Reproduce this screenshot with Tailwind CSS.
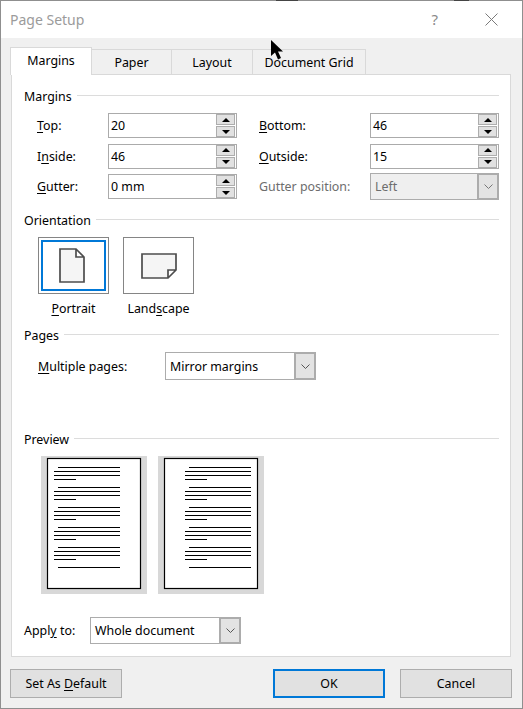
<!DOCTYPE html>
<html lang="en">
<head>
  <meta charset="UTF-8" />
  <title>Page Setup</title>
  <script src="https://cdn.jsdelivr.net/npm/@tailwindcss/browser@4"></script>
</head>
<body class="bg-[#f0f0f0] font-['Noto_Sans',sans-serif] text-[12.4px] text-black">
<div class="relative flex h-[709px] w-[523px] flex-col border border-[#8f8f8f] bg-[#f0f0f0]">

  <!-- Bits of the window behind, showing along the top edge -->
  <div class="absolute -top-px left-[275px] h-px w-[22px] bg-[#444]"></div>
  <div class="absolute -top-px left-[453px] h-px w-[15px] bg-[#444]"></div>

  <!-- Title bar -->
  <div class="flex h-[37px] shrink-0 items-center bg-white pl-[9px]">
    <span class="text-[14px] text-[#9b9b9b]">Page Setup</span>
    <span class="ml-auto mr-[47px] text-[15px] text-[#8a8a8a]">?</span>
    <svg class="mr-[24px]" width="13" height="13" viewBox="0 0 13 13"><path d="M.5.5l12 12M12.5.5l-12 12" stroke="#7a7a7a" fill="none"/></svg>
  </div>

  <!-- Tabs -->
  <div class="mt-[9px] flex h-[27px] items-end pl-[9px]">
    <div class="relative z-10 -mb-px flex h-[28px] w-[82px] items-center justify-center border border-b-0 border-[#d9d9d9] bg-white">Margins</div>
    <div class="flex h-[25px] w-[80px] items-center justify-center border border-b-0 border-l-0 border-[#d9d9d9] pt-[2px]">Paper</div>
    <div class="flex h-[25px] w-[81px] items-center justify-center border border-b-0 border-l-0 border-[#d9d9d9] pt-[2px]">Layout</div>
    <div class="flex h-[25px] w-[113px] items-center justify-center border border-b-0 border-l-0 border-[#d9d9d9] pt-[2px]">Document Grid</div>
  </div>

  <!-- Panel -->
  <div class="ml-[10px] flex h-[583px] w-[500px] flex-col border border-[#d9d9d9] bg-white pl-[12px] pr-[11px]">

    <div class="mt-[13px] flex h-4 items-center gap-[5px]"><span class="translate-y-px">Margins</span><div class="mb-[2px] h-px flex-1 bg-[#dcdcdc]"></div></div>

    <div class="mt-[9px] grid grid-cols-[71px_129px_133px_129px] grid-rows-[25px_25px_25px] gap-y-[5.5px] pl-[13px]">
      <label class="translate-y-px self-center"><u class="underline-offset-2">T</u>op:</label>
      <div class="flex items-center justify-between border border-[#ababab] pl-[2px] pr-px">
        <span class="translate-y-px">20</span>
        <div class="flex w-[19px] flex-col gap-px">
          <div class="flex h-[11px] items-center justify-center border border-[#adadad] bg-[#e1e1e1]"><div class="border-x-[4px] border-b-[4px] border-x-transparent border-b-black"></div></div>
          <div class="flex h-[11px] items-center justify-center border border-[#adadad] bg-[#e1e1e1]"><div class="border-x-[4px] border-t-[4px] border-x-transparent border-t-black"></div></div>
        </div>
      </div>
      <label class="translate-y-px self-center whitespace-nowrap pl-[22px]"><u class="underline-offset-2">B</u>ottom:</label>
      <div class="flex items-center justify-between border border-[#ababab] pl-[2px] pr-px">
        <span class="translate-y-px">46</span>
        <div class="flex w-[19px] flex-col gap-px">
          <div class="flex h-[11px] items-center justify-center border border-[#adadad] bg-[#e1e1e1]"><div class="border-x-[4px] border-b-[4px] border-x-transparent border-b-black"></div></div>
          <div class="flex h-[11px] items-center justify-center border border-[#adadad] bg-[#e1e1e1]"><div class="border-x-[4px] border-t-[4px] border-x-transparent border-t-black"></div></div>
        </div>
      </div>

      <label class="translate-y-px self-center">I<u class="underline-offset-2">n</u>side:</label>
      <div class="flex items-center justify-between border border-[#ababab] pl-[2px] pr-px">
        <span class="translate-y-px">46</span>
        <div class="flex w-[19px] flex-col gap-px">
          <div class="flex h-[11px] items-center justify-center border border-[#adadad] bg-[#e1e1e1]"><div class="border-x-[4px] border-b-[4px] border-x-transparent border-b-black"></div></div>
          <div class="flex h-[11px] items-center justify-center border border-[#adadad] bg-[#e1e1e1]"><div class="border-x-[4px] border-t-[4px] border-x-transparent border-t-black"></div></div>
        </div>
      </div>
      <label class="translate-y-px self-center whitespace-nowrap pl-[22px]"><u class="underline-offset-2">O</u>utside:</label>
      <div class="flex items-center justify-between border border-[#ababab] pl-[2px] pr-px">
        <span class="translate-y-px">15</span>
        <div class="flex w-[19px] flex-col gap-px">
          <div class="flex h-[11px] items-center justify-center border border-[#adadad] bg-[#e1e1e1]"><div class="border-x-[4px] border-b-[4px] border-x-transparent border-b-black"></div></div>
          <div class="flex h-[11px] items-center justify-center border border-[#adadad] bg-[#e1e1e1]"><div class="border-x-[4px] border-t-[4px] border-x-transparent border-t-black"></div></div>
        </div>
      </div>

      <label class="translate-y-px self-center"><u class="underline-offset-2">G</u>utter:</label>
      <div class="flex items-center justify-between border border-[#ababab] pl-[2px] pr-px">
        <span class="translate-y-px">0 mm</span>
        <div class="flex w-[19px] flex-col gap-px">
          <div class="flex h-[11px] items-center justify-center border border-[#adadad] bg-[#e1e1e1]"><div class="border-x-[4px] border-b-[4px] border-x-transparent border-b-black"></div></div>
          <div class="flex h-[11px] items-center justify-center border border-[#adadad] bg-[#e1e1e1]"><div class="border-x-[4px] border-t-[4px] border-x-transparent border-t-black"></div></div>
        </div>
      </div>
      <label class="translate-y-px self-center whitespace-nowrap pl-[22px] text-[#6d6d6d]">Gutter position:</label>
      <div class="-my-px flex items-stretch border border-[#acacac] bg-[#efefef] text-[#6d6d6d]">
        <span class="flex-1 translate-y-px self-center pl-[4px]">Left</span>
        <div class="-m-px flex w-[22px] items-center justify-center border-2 border-[#acacac] bg-[#e3e3e3]">
          <svg width="9" height="5" viewBox="0 0 9 5"><path d="M.5.5l4 4 4-4" stroke="#777" fill="none"/></svg>
        </div>
      </div>
    </div>

    <div class="mt-[13px] flex h-4 items-center gap-[5px]"><span class="translate-y-px">Orientation</span><div class="mb-[2px] h-px flex-1 bg-[#dcdcdc]"></div></div>

    <div class="mt-[9px] flex gap-[14px] pl-[14px]">
      <div class="flex flex-col items-center">
        <div class="flex h-[57px] w-[71px] items-center justify-center border border-[#858585] p-[2px]">
          <div class="flex h-full w-full items-center justify-center border-2 border-[#0078d7]">
            <svg class="mr-[3px]" width="26" height="35" viewBox="0 0 26 35"><path d="M1 1h16l8 8v25H1zM17 1v8h8" fill="#f5f5f5" stroke="#4d4d4d" stroke-width="1.700"/></svg>
          </div>
        </div>
        <div class="mt-[6px] h-4 translate-y-px leading-4"><u class="underline-offset-2">P</u>ortrait</div>
      </div>
      <div class="flex flex-col items-center">
        <div class="flex h-[57px] w-[71px] items-center justify-center border border-[#858585]">
          <svg width="36" height="26" viewBox="0 0 36 26"><path d="M1 1h34v16l-8 8H1zM35 17h-8v8" fill="#f5f5f5" stroke="#4d4d4d" stroke-width="1.700"/></svg>
        </div>
        <div class="mt-[6px] h-4 translate-y-px leading-4">Land<u class="underline-offset-2">s</u>cape</div>
      </div>
    </div>

    <div class="mt-[11px] flex h-4 items-center gap-[5px]"><span class="translate-y-px">Pages</span><div class="mb-[2px] h-px flex-1 bg-[#dcdcdc]"></div></div>

    <div class="mt-[9px] flex h-[28px] items-center pl-[14px]">
      <label class="w-[127px] translate-y-px"><u class="underline-offset-2">M</u>ultiple pages:</label>
      <div class="flex h-full w-[151px] items-stretch border border-[#acacac]">
        <span class="flex-1 translate-y-px self-center pl-[4px]">Mirror margins</span>
        <div class="-m-px flex w-[22px] items-center justify-center border-2 border-[#acacac] bg-[#e3e3e3]">
          <svg width="9" height="5" viewBox="0 0 9 5"><path d="M.5.5l4 4 4-4" stroke="#555" fill="none"/></svg>
        </div>
      </div>
    </div>

    <div class="mt-[51px] flex h-4 items-center gap-[5px]"><span class="translate-y-px">Preview</span><div class="mb-[2px] h-px flex-1 bg-[#dcdcdc]"></div></div>

    <div class="mt-[9px] flex gap-[11px] pl-[17px]">
      <svg width="106" height="138" viewBox="0 0 106 138">
        <rect width="106" height="138" fill="#d8d8d8"/>
        <rect x="6.500" y="2.500" width="93" height="130" fill="#fff" stroke="#000" stroke-width="1.200"/>
        <path stroke="#000" fill="none" d="M17 11.500h62M13 15.500h66M13 19.500h66M13 23.500h22M17 31.500h62M13 35.500h66M13 39.500h66M13 43.500h22M17 51.500h62M13 55.500h66M13 59.500h66M13 63.500h22M17 71.500h62M13 75.500h66M13 79.500h66M13 83.500h22M17 91.500h62M13 95.500h66M13 99.500h66M13 103.500h22M17 111.500h62"/>
      </svg>
      <svg width="106" height="138" viewBox="0 0 106 138">
        <rect width="106" height="138" fill="#d8d8d8"/>
        <rect x="6.500" y="2.500" width="93" height="130" fill="#fff" stroke="#000" stroke-width="1.200"/>
        <path stroke="#000" fill="none" d="M31 11.500h62M27 15.500h66M27 19.500h66M27 23.500h22M31 31.500h62M27 35.500h66M27 39.500h66M27 43.500h22M31 51.500h62M27 55.500h66M27 59.500h66M27 63.500h22M31 71.500h62M27 75.500h66M27 79.500h66M27 83.500h22M31 91.500h62M27 95.500h66M27 99.500h66M27 103.500h22M31 111.500h62"/>
      </svg>
    </div>

    <div class="mt-[23px] flex h-[27px] items-center">
      <label class="w-[66px] translate-y-px">Appl<u class="underline-offset-2">y</u> to:</label>
      <div class="flex h-full w-[151px] items-stretch border border-[#acacac]">
        <span class="flex-1 translate-y-px self-center pl-[4px]">Whole document</span>
        <div class="-m-px flex w-[22px] items-center justify-center border-2 border-[#acacac] bg-[#e3e3e3]">
          <svg width="9" height="5" viewBox="0 0 9 5"><path d="M.5.5l4 4 4-4" stroke="#555" fill="none"/></svg>
        </div>
      </div>
    </div>
  </div>

  <!-- Buttons -->
  <div class="ml-[9px] mt-[12px] flex h-[29px] items-stretch">
    <button class="w-[112px] border border-[#adadad] bg-[#e1e1e1] pt-[2px]">Set As <u class="underline-offset-2">D</u>efault</button>
    <button class="ml-[151px] w-[112px] border-2 border-[#0078d7] bg-[#e1e1e1] pt-[2px]">OK</button>
    <button class="ml-[15px] w-[112px] border border-[#adadad] bg-[#e1e1e1] pt-[2px]">Cancel</button>
  </div>

  <!-- Mouse cursor over the dialog -->
  <svg class="absolute left-[269px] top-[38px]" width="16" height="25" viewBox="0 0 16 25"><path d="M1 1v16l4-3.500 3 7 3-1.500-3-6.500h5z" fill="#000"/></svg>
</div>
</body>
</html>
